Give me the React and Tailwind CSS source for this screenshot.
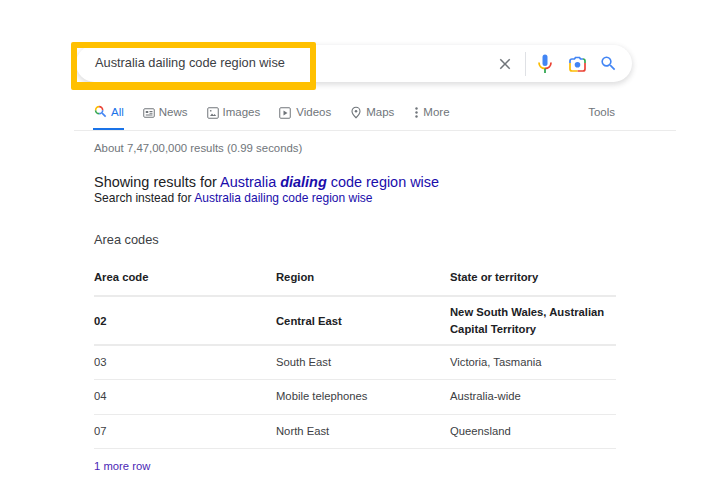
import React from 'react'

function GoogleSearchIcon({ className }) {
  return (
    <svg className={className} viewBox="0 0 24 24" fill="none">
      <path d="M15.5 14h-.79l-.28-.27A6.47 6.47 0 0 0 16 9.5 6.5 6.5 0 1 0 9.5 16c1.61 0 3.09-.59 4.23-1.57l.27.28v.79l5 4.99L20.49 19l-4.99-5zm-6 0C7.01 14 5 11.99 5 9.5S7.01 5 9.5 5 14 7.01 14 9.5 11.99 14 9.5 14z" fill="#4285f4" />
    </svg>
  )
}

function ColorSearchIcon() {
  return (
    <svg className="w-[13px] h-[13px] mt-[1px]" viewBox="0 0 24 24" fill="none" strokeWidth="3">
      <path d="M15 15l6.5 6.5" stroke="#4285f4" />
      <path d="M9.5 3a6.5 6.5 0 0 1 6.5 6.5" stroke="#ea4335" />
      <path d="M16 9.5a6.5 6.5 0 0 1-6.5 6.5" stroke="#4285f4" />
      <path d="M9.5 16A6.5 6.5 0 0 1 3 9.5" stroke="#34a853" />
      <path d="M3 9.5A6.5 6.5 0 0 1 9.5 3" stroke="#fbbc05" />
    </svg>
  )
}

function NewsIcon() {
  return (
    <svg className="w-[12px] h-[12px]" viewBox="0 0 24 24" fill="none" stroke="#70757a" strokeWidth="2">
      <rect x="1.500" y="3.500" width="21" height="17" rx="2" />
      <rect x="5.500" y="8" width="5" height="4" fill="#70757a" stroke="none" />
      <path d="M13 9h6M13 12.500h6M5.500 16h13.500" />
    </svg>
  )
}

function ImagesIcon() {
  return (
    <svg className="w-[12px] h-[12px]" viewBox="0 0 24 24" fill="none" stroke="#70757a" strokeWidth="2">
      <rect x="1.500" y="1.500" width="21" height="21" rx="2" />
      <path d="M6 18l4-5 3 3.500 2-2.500 3.500 4z" fill="#70757a" stroke="none" />
      <circle cx="7.500" cy="7.500" r="1.700" fill="#70757a" stroke="none" />
    </svg>
  )
}

function VideosIcon() {
  return (
    <svg className="w-[12px] h-[12px]" viewBox="0 0 24 24" fill="none" stroke="#70757a" strokeWidth="2">
      <rect x="1.500" y="1.500" width="21" height="21" rx="2" />
      <path d="M9 7v10l8-5z" fill="#70757a" stroke="none" />
    </svg>
  )
}

function MapsIcon() {
  return (
    <svg className="w-[12px] h-[13px]" viewBox="0 0 24 24" fill="none" stroke="#70757a" strokeWidth="2.200">
      <path d="M12 1.500a8 8 0 0 0-8 8c0 5.500 8 13 8 13s8-7.500 8-13a8 8 0 0 0-8-8z" />
      <circle cx="12" cy="9.500" r="2.500" fill="#70757a" stroke="none" />
    </svg>
  )
}

function MoreIcon() {
  return (
    <svg className="w-[3px] h-[11px]" viewBox="0 0 3 11" fill="#70757a">
      <circle cx="1.500" cy="1.500" r="1.200" />
      <circle cx="1.500" cy="5.500" r="1.200" />
      <circle cx="1.500" cy="9.500" r="1.200" />
    </svg>
  )
}

function MicIcon() {
  return (
    <svg className="w-[14px] h-[20px]" viewBox="0 0 14 20" fill="none">
      <rect x="4.500" y="0.500" width="5" height="11.500" rx="2.500" fill="#4285f4" />
      <path d="M1 8.500c0 3.500 2.500 6 6 6" stroke="#fbbc05" strokeWidth="1.800" />
      <path d="M7 14.500c3.500 0 6-2.500 6-6" stroke="#ea4335" strokeWidth="1.800" />
      <path d="M7 14.500v4.500" stroke="#34a853" strokeWidth="1.800" />
    </svg>
  )
}

function CameraIcon() {
  return (
    <svg className="w-[17px] h-[16px]" viewBox="0 0 17 16" fill="none">
      <path d="M1 7V5a2 2 0 0 1 2-2h2.500l1-1.500h4l1 1.500H14" stroke="#4285f4" strokeWidth="1.700" />
      <path d="M14 3a2 2 0 0 1 2 2v2" stroke="#34a853" strokeWidth="1.700" />
      <path d="M16 7v6a2 2 0 0 1-2 2H8.500" stroke="#ea4335" strokeWidth="1.700" />
      <path d="M8.500 15H3a2 2 0 0 1-2-2V7" stroke="#fbbc05" strokeWidth="1.700" />
      <circle cx="8.500" cy="8.800" r="2.800" fill="#4285f4" />
    </svg>
  )
}

const tabs = [
  { label: 'News', icon: <NewsIcon />, cls: 'ml-[19px] gap-[4px]' },
  { label: 'Images', icon: <ImagesIcon />, cls: 'ml-[19px] gap-[4px]' },
  { label: 'Videos', icon: <VideosIcon />, cls: 'ml-[19px] gap-[5px]' },
  { label: 'Maps', icon: <MapsIcon />, cls: 'ml-[19px] gap-[4px]' },
  { label: 'More', icon: <MoreIcon />, cls: 'ml-[21px] gap-[5px]' },
]

const rows = [
  ['03', 'South East', 'Victoria, Tasmania', 'h-[34px]'],
  ['04', 'Mobile telephones', 'Australia-wide', 'h-[35px]'],
  ['07', 'North East', 'Queensland', 'h-[34px]'],
]

export default function App() {
  return (
    <div className="relative w-[722px] h-[501px] bg-white overflow-hidden font-['Liberation_Sans',Arial,sans-serif]">
      <div className="pt-[45px] pl-[76px]">
        <div className="flex items-center w-[556px] h-[37px] rounded-[19px] bg-white shadow-[0_2px_5px_1px_rgba(64,60,67,0.16)] pl-[19px] pr-[14px]">
          <span className="flex-1 pb-[1px] text-[12.8px] text-[#3c4043]">Australia dailing code region wise</span>
          <svg className="w-[18px] h-[18px]" viewBox="0 0 24 24" fill="#70757a">
            <path d="M19 6.410L17.590 5 12 10.590 6.410 5 5 6.410 10.590 12 5 17.590 6.410 19 12 13.410 17.590 19 19 17.590 13.410 12z" />
          </svg>
          <div className="w-px h-[24px] bg-[#dfe1e5] ml-[11px] mr-[12px]" />
          <MicIcon />
          <div className="ml-[17px] flex"><CameraIcon /></div>
          <GoogleSearchIcon className="w-[19px] h-[19px] ml-[13px]" />
        </div>
      </div>

      <div className="ml-[74px] mt-[17px] w-[602px] h-[32px] border-b border-[#ebebeb] flex items-start text-[11.500px] text-[#70757a] pl-[20px] pr-[61px]">
        <div className="flex items-start gap-[4px] h-[31px] -ml-[1px] pl-[1px] border-b-[2px] border-[#1a73e8] text-[#1a73e8] pt-[5px]">
          <ColorSearchIcon />
          <span>All</span>
        </div>
        {tabs.map((tab) => (
          <div key={tab.label} className={`flex items-center pt-[5px] ${tab.cls}`}>
            {tab.icon}
            <span>{tab.label}</span>
          </div>
        ))}
        <span className="ml-auto pt-[5px]">Tools</span>
      </div>

      <div className="pl-[94px] pr-[106px]">
        <div className="mt-[10px] text-[11.400px] leading-[14px] text-[#70757a]">About 7,47,00,000 results (0.99 seconds)</div>

        <div className="mt-[19px] text-[14.450px] leading-[16px] text-[#202124]">
          Showing results for <span className="text-[#1a0dab]">Australia <b><i>dialing</i></b> code region wise</span>
        </div>
        <div className="mt-[1px] text-[12.030px] leading-[14px] text-[#202124]">
          Search instead for <span className="text-[#1a0dab]">Australia dailing code region wise</span>
        </div>

        <div className="mt-[28px] text-[12.800px] leading-[14px] text-[#3c4043]">Area codes</div>

        <table className="mt-[11px] w-full border-collapse text-[11.250px] text-[#3c4043] table-fixed">
          <thead>
            <tr className="h-[38px] border-b-2 border-[#ebebeb] text-[#202124]">
              <th className="w-[182px] text-left font-bold pt-[2px]">Area code</th>
              <th className="w-[174px] text-left font-bold pt-[2px]">Region</th>
              <th className="text-left font-bold pt-[2px]">State or territory</th>
            </tr>
          </thead>
          <tbody>
            <tr className="h-[49px] border-b-2 border-[#ebebeb] font-bold text-[#202124]">
              <td className="pt-[2px]">02</td>
              <td className="pt-[2px]">Central East</td>
              <td className="pt-[1px] leading-[17.500px]">New South Wales, Australian Capital Territory</td>
            </tr>
            {rows.map((row) => (
              <tr key={row[0]} className={`${row[3]} border-b border-[#ebebeb]`}>
                <td>{row[0]}</td>
                <td>{row[1]}</td>
                <td>{row[2]}</td>
              </tr>
            ))}
          </tbody>
        </table>

        <div className="mt-[11px] text-[11.250px] leading-[13px] text-[#4b1fb5]">1 more row</div>
      </div>

      <div className="absolute left-[71px] top-[42px] w-[245px] h-[48px] border-[6px] border-b-[8px] border-[#ffc000] rounded-[2px]" />
    </div>
  )
}
